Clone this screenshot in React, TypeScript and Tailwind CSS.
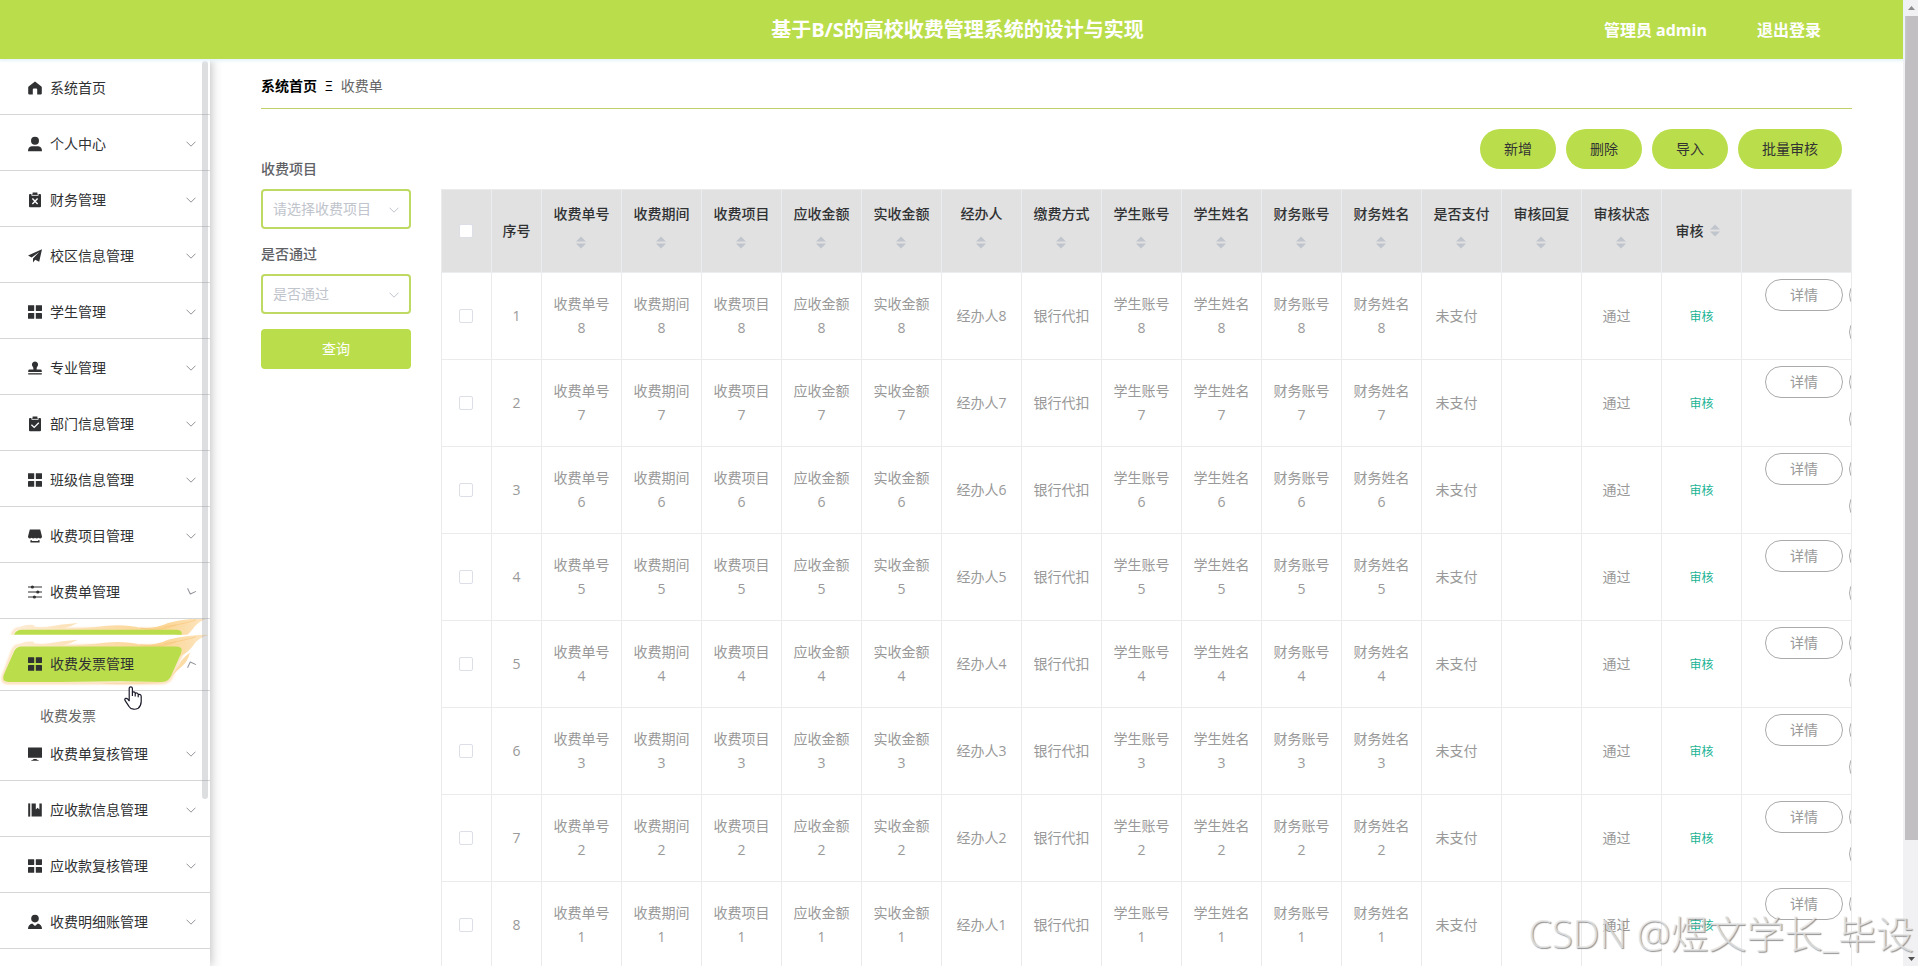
import { ReactNode } from "react";
import clsx from "clsx";

interface MenuEntry {
  label: string;
  icon: ReactNode;
  leaf?: boolean;
  settling?: boolean;
}

const GridIcon = () => (
  <svg viewBox="0 0 14 14" className="h-3.5 w-3.5 flex-shrink-0" fill="currentColor">
    <rect x="0" y="0.2" width="6.2" height="5.8" rx="0.4" />
    <rect x="7.8" y="0.2" width="6.2" height="5.8" rx="0.4" />
    <rect x="0" y="8" width="6.2" height="5.8" rx="0.4" />
    <rect x="7.8" y="8" width="6.2" height="5.8" rx="0.4" />
  </svg>
);

function Icon({ children }: { children: ReactNode }) {
  return (
    <svg viewBox="0 0 14 14" className="h-3.5 w-3.5 flex-shrink-0 overflow-visible" fill="currentColor">
      {children}
    </svg>
  );
}

const menuTop: MenuEntry[] = [
  {
    label: "系统首页",
    leaf: true,
    icon: <Icon><path d="M7 0.4 0.6 5.4Q0.2 5.8 0.2 6.4V12.6Q0.2 13.4 1 13.4H4.8V8.6Q4.8 7.6 5.8 7.6H8.2Q9.2 7.6 9.2 8.6V13.4H13Q13.8 13.4 13.8 12.6V6.4Q13.8 5.8 13.4 5.4Z" /></Icon>,
  },
  {
    label: "个人中心",
    icon: (
      <Icon>
        <circle cx="7" cy="3.8" r="4" />
        <path d="M3.6 9.2H10.4Q14 9.8 14 14.2H0Q0 9.8 3.6 9.2Z" />
      </Icon>
    ),
  },
  {
    label: "财务管理",
    icon: (
      <Icon>
        <path d="M4.6 -0.4H9.4V1H12Q13 1 13 2V13.2Q13 14.2 12 14.2H2Q1 14.2 1 13.2V2Q1 1 2 1H4.6Z" />
        <path d="M3.8 1V2.4H10.2V1" stroke="#fff" strokeWidth="0.8" fill="none" />
        <path d="M4.4 5.6 9.6 11M9.6 5.6 4.4 11" stroke="#fff" strokeWidth="1.4" fill="none" />
      </Icon>
    ),
  },
  {
    label: "校区信息管理",
    icon: (
      <Icon>
        <path d="M14 0.2 0 6.6 3.6 8.6 11.2 3 5 9.6V13.6L7.2 10.8 11.2 12.8Z" />
      </Icon>
    ),
  },
  { label: "学生管理", icon: <GridIcon /> },
  {
    label: "专业管理",
    icon: (
      <Icon>
        <path d="M7 0.4A3.2 3.2 0 0 1 9.4 5.6Q8.4 6.8 8.6 8.6H12.4Q13.8 8.6 13.8 10V11H0.2V10Q0.2 8.6 1.6 8.6H5.4Q5.6 6.8 4.6 5.6A3.2 3.2 0 0 1 7 0.4Z" />
        <rect x="0.2" y="12.2" width="13.6" height="1.3" />
      </Icon>
    ),
  },
  {
    label: "部门信息管理",
    icon: (
      <Icon>
        <path d="M4.6 -0.4H9.4V1H12Q13 1 13 2V13.2Q13 14.2 12 14.2H2Q1 14.2 1 13.2V2Q1 1 2 1H4.6Z" />
        <path d="M3.8 1V2.4H10.2V1" stroke="#fff" strokeWidth="0.8" fill="none" />
        <path d="M3.4 7.8 6.2 10.4 10.8 5.8" stroke="#fff" strokeWidth="1.3" fill="none" />
      </Icon>
    ),
  },
  { label: "班级信息管理", icon: <GridIcon /> },
  {
    label: "收费项目管理",
    icon: (
      <Icon>
        <path d="M1.8 0.4H12.2L14 7.4Q14 9.4 12.2 9.4 10.8 9.4 10.4 8.8 9.8 9.6 8.7 9.6 7.6 9.6 7 8.8 6.4 9.6 5.3 9.6 4.2 9.6 3.6 8.8 3.2 9.4 1.8 9.4 0 9.4 0 7.4Z" />
        <path d="M2.4 11.2H4V12H10V11.2H11.6V13.6H2.4Z" />
      </Icon>
    ),
  },
  {
    label: "收费单管理",
    settling: true,
    icon: (
      <Icon>
        <path d="M0 2H14M0 7H14M0 12H14" stroke="currentColor" strokeWidth="1" />
        <circle cx="4.4" cy="2" r="1.6" />
        <circle cx="9.8" cy="7" r="1.6" />
        <circle cx="6.4" cy="12" r="1.6" />
      </Icon>
    ),
  },
];

const menuBottom: MenuEntry[] = [
  {
    label: "收费单复核管理",
    icon: (
      <Icon>
        <rect x="0" y="0.4" width="14" height="10.4" rx="0.4" />
        <path d="M5.6 12H8.4Q8.4 12.6 11 13.4V13.8H3V13.4Q5.6 12.6 5.6 12Z" />
      </Icon>
    ),
  },
  {
    label: "应收款信息管理",
    icon: (
      <Icon>
        <rect x="0.2" y="0.4" width="2" height="13.2" />
        <path d="M3.6 0.4H7.8V6.4L9.6 4.8 11.4 6.4V0.4H13.8V13.6H3.6Z" />
      </Icon>
    ),
  },
  { label: "应收款复核管理", icon: <GridIcon /> },
  {
    label: "收费明细账管理",
    icon: (
      <Icon>
        <circle cx="7" cy="3.6" r="3.8" />
        <path d="M4.2 8.4 7 11 9.8 8.4Q14 9.4 14 14H0Q0 9.4 4.2 8.4Z" />
      </Icon>
    ),
  },
];

const columns = [
  "收费单号", "收费期间", "收费项目", "应收金额", "实收金额", "经办人", "缴费方式",
  "学生账号", "学生姓名", "财务账号", "财务姓名", "是否支付", "审核回复", "审核状态",
];

const rows = [8, 7, 6, 5, 4, 3, 2, 1];

function Chevron({ className = "" }: { className?: string }) {
  return (
    <svg viewBox="0 0 10 6" className={clsx("h-1.5 w-2.5", className)} fill="none" stroke="currentColor" strokeWidth="1">
      <path d="M0.5 0.7 5 5.2 9.5 0.7" />
    </svg>
  );
}

function SortCaret() {
  return (
    <svg viewBox="0 0 24 34" className="h-[34px] w-6" fill="#c0c4cc">
      <path d="M6 15.5 11 10.5 16 15.5ZM6 17.5 11 22.5 16 17.5Z" />
    </svg>
  );
}

function MenuItem({ item }: { item: MenuEntry }) {
  return (
    <li className="border-b border-[#d5d6d8]">
      <button type="button" className="flex h-[55px] w-full items-center gap-2 pt-0.5 pr-3.5 pl-7 text-sm text-[#303133]">
        {item.icon}
        <span>{item.label}</span>
        {!item.leaf && (
          <Chevron className={clsx("ml-auto text-[#909399]", item.settling && "rotate-20")} />
        )}
      </button>
    </li>
  );
}

// Green brush plate with flames, tiled once above itself
function FlamePlate() {
  return (
    <svg viewBox="0 0 210 72" preserveAspectRatio="none" className="absolute inset-0 h-full w-full">
      <defs>
        <linearGradient id="flame" x1="0" x2="1" y1="0" y2="0">
          <stop offset="0" stopColor="#fdebd3" />
          <stop offset="0.75" stopColor="#fbd491" />
          <stop offset="1" stopColor="#fde7c4" />
        </linearGradient>
        <filter id="glow" x="-10%" y="-30%" width="120%" height="160%">
          <feGaussianBlur stdDeviation="1.2" />
        </filter>
        <clipPath id="slice">
          <rect x="0" y="0" width="210" height="16" />
        </clipPath>
        <g id="plate">
          <path
            d="M18 27H178Q186 28 182 35L171 60Q168 65 160 65H8Q1 65 3 58L12 34Q14 27 18 27Z"
            fill="none" stroke="#fdd3a0" strokeWidth="2" filter="url(#glow)"
          />
          <path
            d="M16 28Q22 22 34 23 32 26 46 25 62 22 78 21 70 25 62 27 90 26 104 24 126 22 140 26 156 27 168 21 188 16 209 16 198 19 193 27 188 34 180 38L174 30Z"
            fill="url(#flame)"
          />
          <path d="M178 48Q182 40 190 34 188 43 181 49 173 56 169 61Z" fill="#fbdba6" />
          <path d="M100 65Q130 64 168 63 150 67 108 66Z" fill="#fbdcae" />
          <path d="M140 26Q160 30 176 23M164 25Q184 22 196 18" stroke="#f8c47a" strokeWidth="0.6" fill="none" />
          <path d="M22 28H176Q184 28 181 35L171 58Q168 64 161 64L120 63 60 64H8Q1 63 4 56L14 33Q16 28 22 28Z" fill="#bade4b" />
        </g>
      </defs>
      <use href="#plate" />
      <g clipPath="url(#slice)">
        <rect width="210" height="16" fill="#fff" />
        <use href="#plate" y="-17" />
      </g>
    </svg>
  );
}

function HandCursor() {
  return (
    <svg viewBox="0 0 18 24" className="pointer-events-none absolute top-[67px] left-[124px] z-10 h-6 w-[18px]">
      <path
        d="M5.2 15.2V2.2Q5.4 0.8 6.8 0.8 8.2 0.8 8.4 2.2V9.4M8.4 10V6.8Q8.6 5.6 9.8 5.8 11 6 11.2 7.2V10.6M11.2 8Q11.6 6.8 12.8 7 14 7.2 14.2 8.4V11.2M14.2 9Q15 8 16.2 8.6 17.2 9.2 17.2 10.4V15.6Q17 20 14.2 22.2 12 23.4 9.6 23.2 6.4 23 4.8 20.2L1 14.4Q0.4 13 1.6 12.4 2.8 12 3.8 13.2L5.2 15"
        fill="#fff" stroke="#1b1b2b" strokeWidth="1.2" strokeLinejoin="round"
      />
    </svg>
  );
}

function Sidebar() {
  return (
    <nav className="relative z-10 w-[210px] flex-shrink-0 overflow-hidden bg-white">
      <ul>
        {menuTop.map((m) => <MenuItem key={m.label} item={m} />)}
        <li className="relative">
          <div className="relative border-b border-[#d5d6d8]">
            <FlamePlate />
            <button type="button" className="relative flex h-[71px] w-full items-center gap-2 pt-[18px] pr-3.5 pl-7 text-sm text-[#303133]">
              <GridIcon />
              <span>收费发票管理</span>
              <Chevron className="ml-auto rotate-160 text-[#909399]" />
            </button>
          </div>
          <a href="#invoice" className="block pt-4 pl-10 text-sm leading-[18px] text-[#666]">收费发票</a>
          <HandCursor />
        </li>
        {menuBottom.map((m) => <MenuItem key={m.label} item={m} />)}
      </ul>
      <div className="absolute top-0.5 right-0.5 h-[738px] w-1.5 rounded-full bg-[#909399]/30" />
    </nav>
  );
}

function FilterSelect({ id, label, placeholder }: { id: string; label: string; placeholder: string }) {
  return (
    <div>
      <label htmlFor={id} className="block text-sm leading-10 font-medium text-[#606266]">{label}</label>
      <div className="relative">
        <select
          id={id}
          className="h-10 w-full appearance-none rounded border-2 border-[#bfda63] bg-white px-2.5 text-sm text-[#c0c4cc]"
        >
          <option>{placeholder}</option>
        </select>
        <Chevron className="pointer-events-none absolute top-[18px] right-3 text-[#c0c4cc]" />
      </div>
    </div>
  );
}

function Checkbox({ label }: { label: string }) {
  return (
    <div className="flex justify-center pr-px">
      <input
        type="checkbox"
        aria-label={label}
        className="block h-3.5 w-3.5 appearance-none rounded-[2px] border border-[#dcdfe6] bg-white"
      />
    </div>
  );
}

const th = "h-[83px] border-r border-b border-[#ebeef0] p-0 text-sm font-medium text-[#303133]";
const td = "h-[87px] border-r border-b border-[#ebebeb] px-2.5 py-0 text-sm leading-6";

function BillTable() {
  return (
    <table className="w-full table-fixed border-separate border-spacing-0 border-t border-l border-[#ebebeb] text-center text-[#999]">
      <colgroup>
        <col className="w-[50px]" />
        <col className="w-[50px]" />
        {columns.map((c) => <col key={c} className="w-20" />)}
        <col className="w-20" />
        <col />
      </colgroup>
      <thead className="bg-[#e1e1e1]">
        <tr>
          <th className={th}><Checkbox label="全选" /></th>
          <th className={th}>序号</th>
          {columns.map((c) => (
            <th key={c} className={th}>
              <div className="flex flex-col items-center leading-6">
                {c}
                <SortCaret />
              </div>
            </th>
          ))}
          <th className={th}>
            <div className="flex items-center justify-center">审核<SortCaret /></div>
          </th>
          <th className={th} />
        </tr>
      </thead>
      <tbody>
        {rows.map((n, i) => (
          <tr key={n}>
            <td className={td}><Checkbox label={`选择第${i + 1}行`} /></td>
            <td className={td}>{i + 1}</td>
            {columns.map((c) => {
              if (c === "经办人") return <td key={c} className={td}>{c}{n}</td>;
              if (c === "缴费方式") return <td key={c} className={td}>银行代扣</td>;
              if (c === "是否支付") return <td key={c} className={td}><span className="mr-2.5">未支付</span></td>;
              if (c === "审核回复") return <td key={c} className={td} />;
              if (c === "审核状态") return <td key={c} className={td}><span className="mr-2.5">通过</span></td>;
              return <td key={c} className={td}>{c}<br />{n}</td>;
            })}
            <td className={td}>
              <button type="button" className="text-xs text-[#1bb394]">审核</button>
            </td>
            <td className="overflow-hidden border-r border-b border-[#ebebeb] p-0 align-top">
              <div className="overflow-hidden pt-1.5 pl-[23px]">
                <div className="grid w-[162px] grid-cols-2 gap-x-1.5 gap-y-[5px]">
                  <button type="button" className="h-8 rounded-full border border-[#aaa] text-sm">详情</button>
                  <button type="button" aria-label="修改" className="h-8 rounded-full border border-[#aaa]" />
                  <button type="button" aria-label="删除" className="col-start-2 h-8 rounded-full border border-[#aaa]" />
                </div>
              </div>
            </td>
          </tr>
        ))}
      </tbody>
    </table>
  );
}

export default function App() {
  return (
    <div className="relative flex h-screen overflow-hidden bg-white font-['Open_Sans','Noto_Sans_CJK_SC',sans-serif]">
      <div className="flex min-w-0 flex-1 flex-col">
        <header className="relative z-20 grid h-[59px] flex-shrink-0 grid-cols-[1fr_auto_1fr] items-center bg-[#bade4b] pl-3 text-white shadow-[0_1px_3px_1px_#e6f3fb]">
          <h1 className="col-start-2 text-xl font-bold">基于B/S的高校收费管理系统的设计与实现</h1>
          <div className="flex justify-end gap-[50px] pr-[82px] text-base font-bold">
            <span>管理员 admin</span>
            <button type="button">退出登录</button>
          </div>
        </header>

        <div className="flex min-h-0 flex-1">
          <div className="z-10 flex bg-white shadow-[1px_0_10px_rgba(64,64,64,0.35)]">
            <Sidebar />
          </div>

          <main className="min-w-0 flex-1 overflow-hidden px-[51px]">
            <div className="flex h-[50px] items-center gap-2 border-b border-[#bfd16b] pt-1 text-sm">
              <a href="#home" className="font-bold text-black">系统首页</a>
              <span className="text-black">Ξ</span>
              <span className="text-[#666]">收费单</span>
            </div>

            <div className="flex gap-[30px] pt-5">
              <form className="w-[150px] flex-shrink-0 pt-5">
                <div className="flex flex-col gap-[5px]">
                  <FilterSelect id="project" label="收费项目" placeholder="请选择收费项目" />
                  <FilterSelect id="passed" label="是否通过" placeholder="是否通过" />
                </div>
                <button type="button" className="mt-[15px] h-10 w-full rounded bg-[#bade4b] text-sm text-white">查询</button>
              </form>

              <section className="min-w-0 flex-1">
                <div className="mb-5 flex justify-end gap-2.5 pr-2.5">
                  {["新增", "删除", "导入", "批量审核"].map((label) => (
                    <button key={label} type="button" className="h-10 rounded-full bg-[#bade4b] px-6 text-sm text-[#333]">
                      {label}
                    </button>
                  ))}
                </div>
                <BillTable />
              </section>
            </div>
          </main>
        </div>
      </div>

      {/* page scrollbar */}
      <div className="flex w-[15px] flex-shrink-0 flex-col items-end bg-[#f1f1f3]">
        <svg viewBox="0 0 13 16" className="h-4 w-[13px]" fill="#8b8b8b"><path d="M3 10 6.5 6 10 10Z" /></svg>
        <div className="h-[824px] w-[13px] bg-[#c1bfc2]" />
        <svg viewBox="0 0 13 16" className="mt-auto h-4 w-[13px]" fill="#505050"><path d="M3 7 6.5 11 10 7Z" /></svg>
      </div>

      <div className="pointer-events-none absolute right-1 bottom-1.5 z-30 text-[38px] leading-[54px] font-light text-[#e6e6e6]/80 [text-shadow:1px_1px_1px_rgba(110,110,110,0.75)]">
        CSDN @煜文学长_毕设
      </div>
    </div>
  );
}
